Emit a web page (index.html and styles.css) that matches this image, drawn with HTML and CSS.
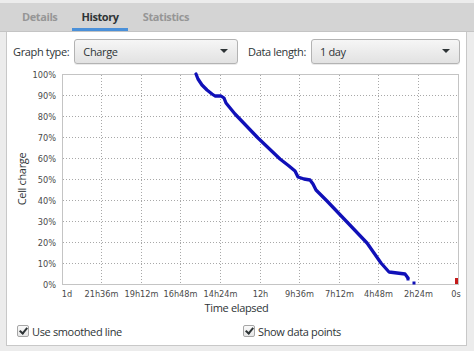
FILE: index.html
```html
<!DOCTYPE html>
<html>
<head>
<meta charset="utf-8">
<link rel="stylesheet" href="styles.css">
</head>
<body>
<div class="window">
  <div class="tabbar">
    <div class="tab">Details</div>
    <div class="tab active">History</div>
    <div class="tab">Statistics</div>
  </div>
  <div class="pane">
    <div class="controls">
      <div class="field first">
        <span class="label">Graph type:</span>
        <div class="combo"><span>Charge</span><span class="arrow"></span></div>
      </div>
      <div class="field second">
        <span class="label">Data length:</span>
        <div class="combo"><span>1 day</span><span class="arrow"></span></div>
      </div>
    </div>
    <svg class="chart" width="460" height="234" viewBox="7 66 460 234" xmlns="http://www.w3.org/2000/svg">
      <g class="grid">
        <line x1="63" y1="94.5" x2="458" y2="94.5"/>
        <line x1="63" y1="115.5" x2="458" y2="115.5"/>
        <line x1="63" y1="136.5" x2="458" y2="136.5"/>
        <line x1="63" y1="157.5" x2="458" y2="157.5"/>
        <line x1="63" y1="178.5" x2="458" y2="178.5"/>
        <line x1="63" y1="199.5" x2="458" y2="199.5"/>
        <line x1="63" y1="220.5" x2="458" y2="220.5"/>
        <line x1="63" y1="241.5" x2="458" y2="241.5"/>
        <line x1="63" y1="262.5" x2="458" y2="262.5"/>
        <line x1="101.5" y1="74" x2="101.5" y2="283"/>
        <line x1="141.5" y1="74" x2="141.5" y2="283"/>
        <line x1="180.5" y1="74" x2="180.5" y2="283"/>
        <line x1="220.5" y1="74" x2="220.5" y2="283"/>
        <line x1="260.5" y1="74" x2="260.5" y2="283"/>
        <line x1="299.5" y1="74" x2="299.5" y2="283"/>
        <line x1="339.5" y1="74" x2="339.5" y2="283"/>
        <line x1="378.5" y1="74" x2="378.5" y2="283"/>
        <line x1="418.5" y1="74" x2="418.5" y2="283"/>
      </g>
      <rect class="frame" x="62.5" y="73.5" width="396" height="210"/>
      <g class="ylab">
        <text x="56" y="77">100%</text>
        <text x="56" y="98">90%</text>
        <text x="56" y="119">80%</text>
        <text x="56" y="140">70%</text>
        <text x="56" y="161">60%</text>
        <text x="56" y="182">50%</text>
        <text x="56" y="203">40%</text>
        <text x="56" y="224">30%</text>
        <text x="56" y="245">20%</text>
        <text x="56" y="266">10%</text>
        <text x="56" y="287">0%</text>
      </g>
      <g class="xlab">
        <text x="67" y="296">1d</text>
        <text x="101.5" y="296">21h36m</text>
        <text x="141.5" y="296">19h12m</text>
        <text x="180.5" y="296">16h48m</text>
        <text x="220.5" y="296">14h24m</text>
        <text x="260.5" y="296">12h</text>
        <text x="299.5" y="296">9h36m</text>
        <text x="339.5" y="296">7h12m</text>
        <text x="378.5" y="296">4h48m</text>
        <text x="418.5" y="296">2h24m</text>
        <text x="456" y="296">0s</text>
      </g>
      <text class="ytitle" x="0" y="0" transform="translate(26 178) rotate(-90)">Cell charge</text>
      <polyline class="series" points="196,73 198,78 202,84 207,89 212,93 215,95 221,95 224,97 226,102 235,113 258,137 280,158 289,165 295,170 298,176 304,178 310,179 313,183 316,189 327,200 347,221 367,242 381,262 389,271 405,273 408,277"/>
      <rect class="pt" x="406.5" y="276.5" width="3" height="3"/>
      <rect class="pt" x="412.5" y="280.5" width="3" height="3"/>
      <rect class="red" x="455" y="277" width="3" height="6"/>
    </svg>
    <div class="xtitle">Time elapsed</div>
    <div class="checks">
      <label class="check first"><span class="box"></span>Use smoothed line</label>
      <label class="check"><span class="box"></span>Show data points</label>
    </div>
  </div>
</div>
</body>
</html>
```
FILE: styles.css
```css
html, body {
  margin: 0;
  padding: 0;
}
body {
  width: 474px;
  height: 351px;
  overflow: hidden;
  background: #ececec;
  font-family: "Open Sans", "Noto Sans", sans-serif;
  font-size: 11px;
  letter-spacing: -0.35px;
  color: #2e3436;
}
.window {
  display: flex;
  flex-direction: column;
  height: 351px;
}
.tabbar {
  margin-top: 3px;
  height: 28px;
  background: #d4d4d4;
  display: flex;
  align-items: stretch;
  padding-left: 13px;
  border-bottom: 1px solid #c4c4c4;
}
.tab {
  font-weight: bold;
  letter-spacing: -0.4px;
  color: #969696;
  padding: 1px 9px 0 9px;
  display: flex;
  align-items: center;
  border-bottom: 3px solid transparent;
  margin-right: 6px;
}
.tab.active {
  color: #2e3436;
  border-bottom-color: #4a90d9;
}
.pane {
  margin: 0 7px 5px 6px;
  background: #fff;
  border: 1px solid #c8c8c8;
  border-top: none;
  flex: 1;
  display: flex;
  flex-direction: column;
}
.controls {
  display: flex;
  padding: 6px 6px 0 6px;
  height: 26px;
}
.field {
  display: flex;
  align-items: center;
}
.field.first {
  width: 225px;
}
.field.second {
  flex: 1;
  padding-left: 10px;
}
.label {
  margin-right: 5px;
  white-space: nowrap;
}
.combo {
  flex: 1;
  height: 25px;
  box-sizing: border-box;
  border: 1px solid #b3b3b3;
  border-radius: 3px;
  background: linear-gradient(#f6f6f6, #e2e2e2);
  box-shadow: 0 1px 0 rgba(0,0,0,0.08);
  display: flex;
  align-items: center;
  justify-content: space-between;
  padding: 0 9px 0 8px;
}
.arrow {
  width: 0;
  height: 0;
  border-left: 4px solid transparent;
  border-right: 4px solid transparent;
  border-top: 4px solid #2e3436;
}
.chart {
  display: block;
  margin-top: 3px;
}
.grid line {
  stroke: #a8a8a8;
  stroke-width: 1;
  stroke-dasharray: 1 2;
}
.frame {
  fill: none;
  stroke: #c4c4c4;
  stroke-width: 1;
}
.ylab text, .xlab text {
  font-family: "DejaVu Sans", sans-serif;
  font-size: 8.2px;
  letter-spacing: 0;
  fill: #4a4a4a;
}
.ylab text {
  text-anchor: end;
}
.xlab text {
  text-anchor: middle;
}
.ytitle {
  font-family: "Open Sans", sans-serif;
  font-size: 11px;
  fill: #2e3436;
  text-anchor: middle;
}
.series {
  fill: none;
  stroke: #1010b8;
  stroke-width: 3.3;
  stroke-linejoin: round;
  stroke-linecap: round;
}
.pt {
  fill: #1010b8;
}
.red {
  fill: #c41a1a;
}
.xtitle {
  text-align: center;
  line-height: 14px;
  height: 14px;
}
.checks {
  display: flex;
  margin-top: 8px;
  padding-left: 10px;
  height: 16px;
  align-items: center;
}
.check {
  display: flex;
  align-items: center;
}
.check.first {
  width: 226px;
}
.box {
  width: 12px;
  height: 12px;
  box-sizing: border-box;
  border: 1px solid #a6a6a6;
  border-radius: 2px;
  background: linear-gradient(#fafafa, #e6e6e6);
  margin-right: 3px;
  position: relative;
}
.box::after {
  content: "";
  position: absolute;
  left: 3px;
  top: 0px;
  width: 3px;
  height: 6px;
  border-right: 2px solid #2e3436;
  border-bottom: 2px solid #2e3436;
  transform: rotate(40deg);
}
```
